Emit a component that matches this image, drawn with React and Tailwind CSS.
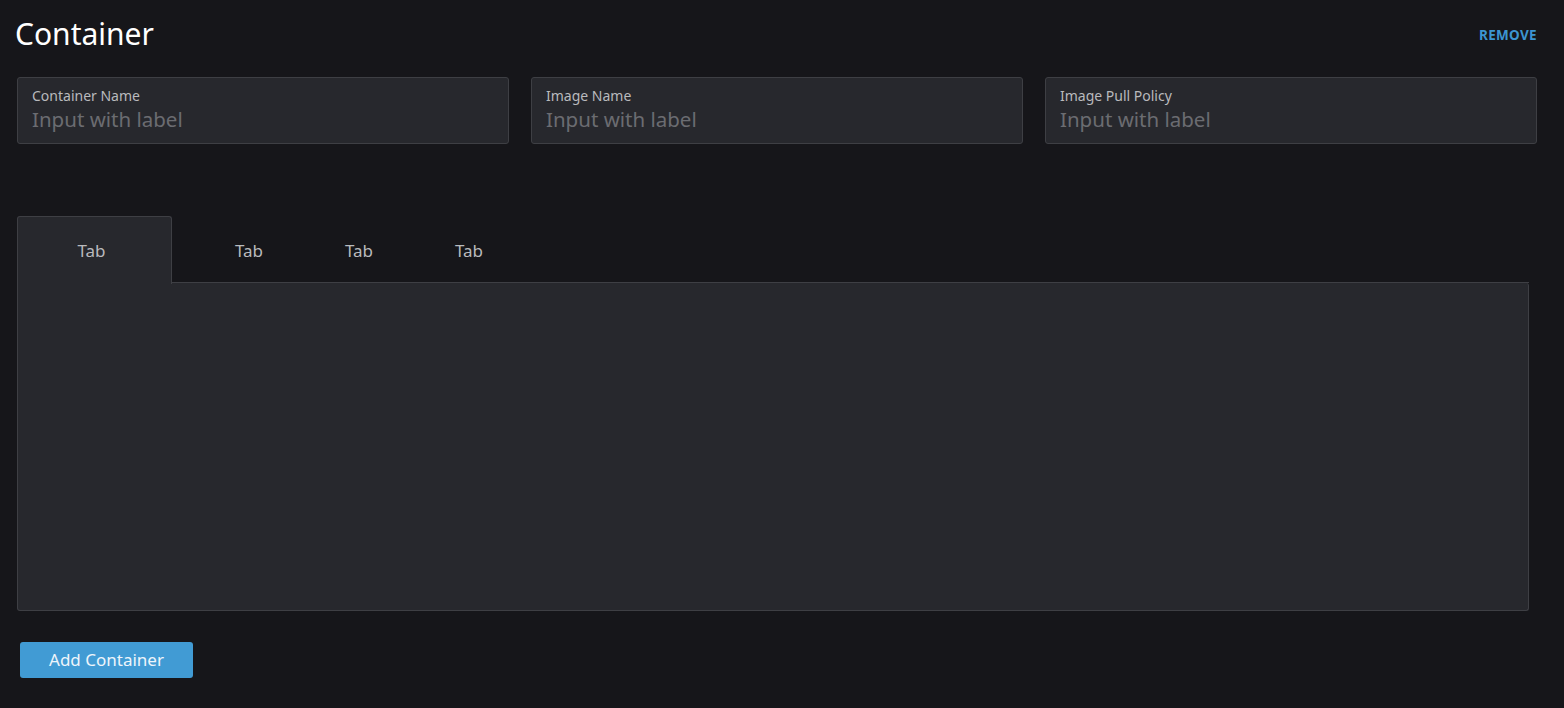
import { useState } from "react";

const fields = ["Container Name", "Image Name", "Image Pull Policy"];
const tabs = ["Tab", "Tab", "Tab", "Tab"];

function LabeledInput({ label }) {
  return (
    <label className="flex h-[67px] flex-col rounded-[3px] border border-[#3e3f44] bg-[#27282d] px-[14px] pt-[9px]">
      <span className="text-[14px] leading-[18px] text-[#b9babd]">{label}</span>
      <input
        placeholder="Input with label"
        className="mt-[1px] bg-transparent text-[20.5px] leading-[26px] text-[#d0d0d3] outline-none placeholder:text-[#6b6c71]"
      />
    </label>
  );
}

export default function App() {
  const [active, setActive] = useState(0);

  return (
    <div
      className="min-h-[708px] bg-[#16161a] pl-[17px] pr-[27px] pt-[13px]"
      style={{ fontFamily: '"Noto Sans", "Open Sans", sans-serif' }}
    >
      {/* Header */}
      <div className="flex items-center justify-between">
        <h1 className="-ml-[2px] text-[30px] leading-[42px] text-white">Container</h1>
        <button className="mt-[3px] text-[13.5px] font-bold tracking-wide text-[#3c95d1]">REMOVE</button>
      </div>

      {/* Inputs */}
      <div className="mt-[22px] grid grid-cols-3 gap-[22px]">
        {fields.map((f) => (
          <LabeledInput key={f} label={f} />
        ))}
      </div>

      {/* Tabs */}
      <div className="mt-[72px] mr-[8px]">
        <div className="flex h-[67px] items-stretch">
          <button
            onClick={() => setActive(0)}
            className="relative z-10 -mb-px w-[155px] rounded-t-[3px] border border-b-0 border-[#3e3f44] bg-[#27282d] pr-[6px] text-[17px] text-[#b9babd]"
          >
            {tabs[0]}
          </button>
          <div className="flex flex-1 items-stretch border-b border-[#3e3f44] pl-[22px]">
            {tabs.slice(1).map((t, j) => (
              <button
                key={j}
                onClick={() => setActive(j + 1)}
                className="w-[110px] pt-[3px] text-[17px] text-[#b9babd]"
              >
                {t}
              </button>
            ))}
          </div>
        </div>
        <div className="h-[328px] rounded-b-[3px] rounded-tr-[3px] border border-t-0 border-[#3e3f44] bg-[#27282d]" />
      </div>

      {/* Footer */}
      <button className="mt-[31px] ml-[3px] h-[36px] w-[173px] rounded-[3px] bg-[#419bd4] text-[17px] text-[#eef5fb]">
        Add Container
      </button>
    </div>
  );
}
